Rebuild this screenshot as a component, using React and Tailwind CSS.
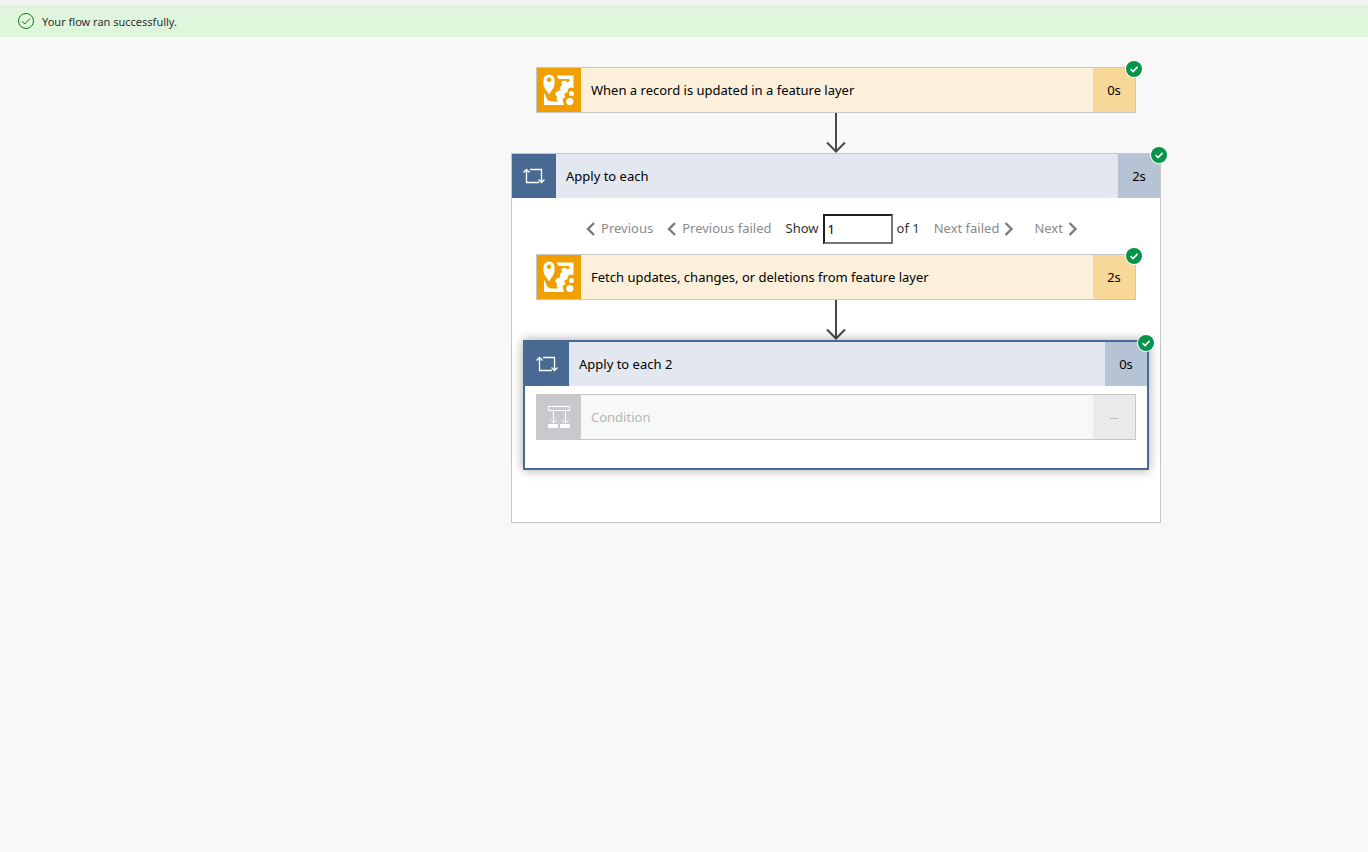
import React, { useState } from 'react';

function SuccessBadge() {
  return (
    <svg className="absolute -top-2 -right-2 size-[18px]" viewBox="0 0 18 18" role="img" aria-label="Succeeded">
      <circle cx="9" cy="9" r="9" fill="#fff" />
      <circle cx="9" cy="9" r="8" fill="#059549" />
      <path d="M5.6 9.2 L8 11.5 L12.6 6.8" fill="none" stroke="#fff" strokeWidth="1.7" />
    </svg>
  );
}

function MapIcon() {
  return (
    <svg className="size-11" viewBox="0 0 44 44" fill="#fff" aria-hidden="true">
      <path fillRule="evenodd" d="M12 6.500 a5.500 5.500 0 0 1 5.500 5.500 V16 C17.500 19.500 14.500 22 12 26.500 C9.500 22 6.500 19.500 6.500 16 V12 A5.500 5.500 0 0 1 12 6.500 Z M12 9.500 a2.300 2.300 0 1 0 0.010 0 Z" />
      <path d="M19.500 7.500 H36.500 V20 L33.500 19.500 L31 21 L30.500 24 L27 26 L28.500 29 L25.500 31 L27 37 H7 V24.500 L10.500 32 L14 33.500 H21 L19.500 31 L20 29 L18 25.500 L20.500 23 L23.500 22.500 L23 19 L25 17 L24.500 13.500 L28.500 12.500 L30 14.500 L32.500 13.500 V11 H21.500 Z" />
      <circle cx="34.500" cy="25.600" r="2.500" />
      <circle cx="32.800" cy="33.500" r="3.600" />
    </svg>
  );
}

function LoopIcon() {
  return (
    <svg className="size-11" viewBox="0 0 44 44" fill="none" stroke="#fff" strokeWidth="1.3" aria-hidden="true">
      <path d="M14.500 16 V28.500 H27 M11.500 18.500 L14.500 15.500 L17.500 18.500" />
      <path d="M18 15.500 H29.500 V28 M26.500 25.500 L29.500 28.500 L32.500 25.500" />
    </svg>
  );
}

function ConditionIcon() {
  return (
    <svg className="size-11" viewBox="0 0 44 44" fill="none" stroke="#fff" aria-hidden="true">
      <rect x="11.500" y="11.500" width="21" height="4" />
      <path d="M16.500 16 V28 M28.500 16 V28 M13 24.500 L16.500 28 L20 24.500 M25 24.500 L28.500 28 L32 24.500" />
      <path d="M11 29 H21 V33 H11 Z M23 29 H33 V33 H23 Z" fill="#fff" stroke="none" />
    </svg>
  );
}

function Arrow() {
  return (
    <svg className="mx-auto h-10 w-6" viewBox="0 0 24 40" fill="none" stroke="#484848" strokeWidth="2" aria-hidden="true">
      <path d="M12 0 V38 M3 29.500 L12 38.500 L21 29.500" />
    </svg>
  );
}

function Chevron({ right }) {
  return (
    <svg className="h-4 w-[10px]" viewBox="0 0 10 16" fill="none" stroke="#7a7a7a" strokeWidth="2.4" aria-hidden="true">
      <path d={right ? 'M1.500 2 L7.500 8 L1.500 14' : 'M8 2 L2 8 L8 14'} />
    </svg>
  );
}

function Action({ title, time, icon, disabled }) {
  return (
    <div className={`relative mx-auto flex h-[46px] w-full max-w-[600px] border ${disabled ? 'border-[#c8c6c4] bg-[#f7f9f8] text-[#b5b5b5]' : 'border-[#c8c6c4] bg-[#fcf0da] text-black'}`}>
      <div className={`w-11 shrink-0 ${disabled ? 'bg-[#c8c9cc]' : 'bg-[#f09f00]'}`}>{icon}</div>
      <div className="flex flex-1 items-center px-[10px] pt-0.5">{title}</div>
      <div className={`flex w-[42px] items-center justify-center pt-0.5 ${disabled ? 'bg-[#e8eaeb]' : 'bg-[#f7d898]'}`}>{time}</div>
      {!disabled && <SuccessBadge />}
    </div>
  );
}

function ScopeHeader({ title, time }) {
  return (
    <div className="flex h-11 bg-[#e3e8f0] text-black">
      <div className="w-11 shrink-0 bg-[#486991]"><LoopIcon /></div>
      <div className="flex flex-1 items-center px-[10px] pt-0.5">{title}</div>
      <div className="flex w-[42px] items-center justify-center bg-[#b5c3d4] pt-0.5">{time}</div>
    </div>
  );
}

function Pager() {
  const [page, setPage] = useState('1');

  return (
    <div className="mb-[10px] flex h-[30px] items-center justify-center pr-2 text-[#8a8a8a]">
      <button className="mr-[14px] flex items-center gap-[5px]"><Chevron />Previous</button>
      <button className="mr-[14px] flex items-center gap-[5px]"><Chevron />Previous failed</button>
      <label htmlFor="page" className="mr-1 text-[#323130]">Show</label>
      <input
        id="page"
        type="text"
        value={page}
        onChange={(e) => setPage(e.target.value)}
        className="h-[30px] w-[70px] border-2 border-t-[#1f1f1f] border-r-[#767676] border-b-[#767676] border-l-[#1f1f1f] bg-white px-[3px] text-black"
      />
      <span className="ml-1 text-[#323130]">of 1</span>
      <button className="ml-[14px] flex items-center gap-[5px]">Next failed<Chevron right /></button>
      <button className="ml-5 flex items-center gap-[5px]">Next<Chevron right /></button>
    </div>
  );
}

function App() {
  return (
    <div className="min-h-screen bg-[#f8f8f8] font-['Segoe_UI','Noto_Sans',sans-serif] text-[13px]">
      <div className="h-[5px] bg-[#f3f3f3]" />
      <div role="status" className="flex h-8 items-center gap-2 bg-[#dff6dd] px-[18px] text-[11px] text-[#323130]">
        <svg className="size-4" viewBox="0 0 16 16" fill="none" stroke="#107c10" aria-hidden="true">
          <circle cx="8" cy="8" r="7.500" />
          <path d="M4 8.200 L6.800 11 L12 5.600" />
        </svg>
        <span className="pt-0.5">Your flow ran successfully.</span>
      </div>

      <main className="pt-[30px] pl-[304px]">
        <Action title="When a record is updated in a feature layer" time="0s" icon={<MapIcon />} />
        <Arrow />
        <section className="relative mx-auto w-full max-w-[650px] border border-[#c8c6c4] bg-white pb-[52px]">
          <ScopeHeader title="Apply to each" time="2s" />
          <SuccessBadge />
          <div className="px-[11px] pt-4">
            <Pager />
            <Action title="Fetch updates, changes, or deletions from feature layer" time="2s" icon={<MapIcon />} />
            <Arrow />
            <section className="relative border-2 border-[#486991] bg-white pb-7 shadow-[0_0_10px_rgba(0,0,0,0.35)]">
              <ScopeHeader title="Apply to each 2" time="0s" />
              <SuccessBadge />
              <div className="px-[11px] pt-2">
                <Action title="Condition" time="--" icon={<ConditionIcon />} disabled />
              </div>
            </section>
          </div>
        </section>
      </main>
    </div>
  );
}

export default App;
